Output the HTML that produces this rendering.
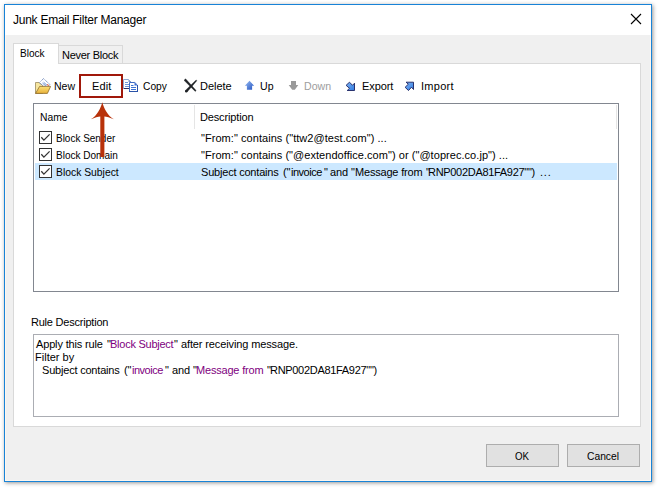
<!DOCTYPE html>
<html><head><meta charset="utf-8">
<style>
*{box-sizing:border-box;margin:0;padding:0}
html,body{width:660px;height:492px;background:#fff;overflow:hidden;position:relative;font-family:"Liberation Sans",sans-serif;font-size:11px;color:#000}
.a{position:absolute;white-space:pre;line-height:14px}
svg.a{line-height:0}
#win{position:absolute;left:4px;top:4px;width:648px;height:478px;border:1px solid #1883d7;background:#f0f0f0;box-shadow:1px 1px 4px rgba(0,0,0,0.42)}
#titlebar{position:absolute;left:5px;top:5px;width:646px;height:30px;background:#fff}
#inner{position:absolute;left:5px;top:35px;width:646px;height:446px;border:1px solid #fdf7f0;border-top:none}
.tab{position:absolute;border:1px solid #d9d9d9;border-bottom:none}
#panel{position:absolute;left:13px;top:63px;width:628px;height:364px;background:#fff;border:1px solid #d9d9d9}
#list{position:absolute;left:33px;top:103px;width:586px;height:189px;border:1px solid #828790;background:#fff}
#rule{position:absolute;left:33px;top:334px;width:586px;height:83px;border:1px solid #abadb3;background:#fff}
.btn{position:absolute;top:444px;width:73px;height:23px;border:1px solid #adadad;background:#e1e1e1}
.cb{position:absolute;left:39px;width:13px;height:13px;border:1px solid #333;background:#fff}
.p{color:#800080}
</style></head><body>
<div id="win"></div>
<div id="titlebar"></div>
<div id="inner"></div>
<svg class="a" style="left:630px;top:13px" width="12" height="12" viewBox="0 0 12 12"><path d="M1 1L11 11M11 1L1 11" stroke="#000" stroke-width="1.1"/></svg>

<div id="panel"></div>
<div class="tab" style="left:58px;top:45px;width:65px;height:18px;background:#f0f0f0"></div>
<div class="tab" style="left:13px;top:43px;width:46px;height:21px;background:#fff"></div>

<!-- toolbar -->
<div class="a" style="left:79px;top:74px;width:44px;height:24px;border:2px solid #a0180a"></div>

<!-- icons -->
<svg class="a" style="left:35px;top:78px" width="16" height="16" viewBox="0 0 16 16">
 <defs><linearGradient id="gf" x1="0" y1="0" x2="0" y2="1"><stop offset="0" stop-color="#fadf78"/><stop offset="1" stop-color="#e9b23a"/></linearGradient></defs>
 <path d="M0.5 4.5 L4 4.5 L5.5 6 L7.5 6 L7.5 15.5 L0.5 15.5 Z" fill="#f6e6a0" stroke="#9c8a60" stroke-width="0.8"/>
 <path d="M8.5 0.6 L15 6.6 L11.2 10.5 L4.4 4.6 Z" fill="#fff" stroke="#4a6aa8" stroke-width="0.9" stroke-dasharray="1 0.8"/>
 <path d="M7.5 5 L11 8.2 M8.6 4.2 L12 7.3" stroke="#5f86cc" stroke-width="0.9"/>
 <path d="M12.2 6.3 L13.6 7.6" stroke="#e05030" stroke-width="1.1"/>
 <path d="M0.6 15.4 L4.6 8.4 L15.6 8.4 L12.4 15.4 Z" fill="url(#gf)" stroke="#8f6c2c" stroke-width="0.8"/>
</svg>
<svg class="a" style="left:122px;top:78px" width="17" height="15" viewBox="0 0 17 15">
 <path d="M1.5 1.5 L6.5 1.5 L9 4 L9 10.5 L1.5 10.5 Z" fill="#fff" stroke="#8ea8d4" stroke-width="1"/>
 <path d="M1.8 10.5 L7 10.5" stroke="#2c2f66" stroke-width="1"/>
 <path d="M6.5 1.5 L6.5 4 L9 4 Z" fill="#7c92c4"/>
 <path d="M3 4.5 L6 4.5 M3 6.5 L8 6.5 M3 8.5 L8 8.5" stroke="#5d8ad8" stroke-width="0.9"/>
 <path d="M7.5 4.5 L12.8 4.5 L15.5 7.2 L15.5 13.5 L7.5 13.5 Z" fill="#fff" stroke="#3f6cc4" stroke-width="1"/>
 <path d="M7 13.5 L16 13.5 M15.5 7 L15.5 14" stroke="#2a52a8" stroke-width="1"/>
 <path d="M12.5 4.5 L12.5 7.5 L15.5 7.5 Z" fill="#3a6ad0"/>
 <path d="M9 7.5 L11.5 7.5 M9 9.5 L14 9.5 M9 11.5 L14 11.5" stroke="#3c72d4" stroke-width="1"/>
</svg>
<svg class="a" style="left:183px;top:78px" width="15" height="15" viewBox="183 78 15 15">
 <path d="M184.0 80.36 L185.6 78.84 L196.13 90.59 L195.27 91.41 Z" fill="#1f2226" stroke="#1f2226" stroke-width="0.35" stroke-linejoin="round"/>
 <path d="M196.135 79.958 L196.865 80.642 L187.076 92.12 L185.324 90.48 Z" fill="#1f2226" stroke="#1f2226" stroke-width="0.35" stroke-linejoin="round"/>
 <circle cx="186.2" cy="91.3" r="1.2" fill="#1f2226"/>
</svg>
<svg class="a" style="left:243px;top:78px" width="14" height="14" viewBox="243 78 14 14">
 <defs><linearGradient id="gu" x1="0" y1="0" x2="1" y2="1"><stop offset="0" stop-color="#9cc0f4"/><stop offset="1" stop-color="#1f4fbf"/></linearGradient></defs>
 <path d="M249.5 80.8 L254.1 85.7 L252.1 85.7 L252.1 89.8 L246.9 89.8 L246.9 85.7 L244.9 85.7 Z" fill="url(#gu)"/>
</svg>
<svg class="a" style="left:287px;top:78px" width="14" height="14" viewBox="287 78 14 14">
 <path d="M291 81 L296 81 L296 85 L298.3 85 L294.8 89.8 L292.2 89.8 L288.7 85 L291 85 Z" fill="#9a9a9a"/>
</svg>
<svg class="a" style="left:343px;top:78px" width="16" height="16" viewBox="343 78 16 16">
 <defs><linearGradient id="ge" x1="0" y1="0" x2="1" y2="1"><stop offset="0" stop-color="#7fb4f4"/><stop offset="1" stop-color="#2f7ae0"/></linearGradient></defs>
 <path d="M354.5 83.2 L354.5 90.5 L347.2 90.5 L349.5 88.3 L346.1 85.3 L349.5 82.2 L352.5 85.3 Z" fill="url(#ge)" stroke="#1c2260" stroke-width="0.9"/>
</svg>
<svg class="a" style="left:402px;top:78px" width="16" height="16" viewBox="402 78 16 16">
 <path d="M413.5 82.2 L413.5 89.5 L411.5 87.2 L408.5 90.5 L405.1 87.3 L408.3 84.2 L406.1 82.2 Z" fill="url(#ge)" stroke="#1c2260" stroke-width="0.9"/>
</svg>

<div id="list"></div>
<div class="a" style="left:194px;top:105px;width:1px;height:24px;background:#e5e5e5"></div>
<div class="a" style="left:616px;top:105px;width:1px;height:24px;background:#e5e5e5"></div>
<div class="a" style="left:35px;top:163px;width:582px;height:17px;background:#cce8ff"></div>
<div class="cb" style="top:131px"></div>
<div class="cb" style="top:148px"></div>
<div class="cb" style="top:165px"></div>
<svg class="a" style="left:39px;top:131px" width="13" height="13" viewBox="0 0 13 13"><path d="M2.3 6.3 L4.9 9.1 L10.6 3.4" fill="none" stroke="#333" stroke-width="1.3"/></svg>
<svg class="a" style="left:39px;top:148px" width="13" height="13" viewBox="0 0 13 13"><path d="M2.3 6.3 L4.9 9.1 L10.6 3.4" fill="none" stroke="#333" stroke-width="1.3"/></svg>
<svg class="a" style="left:39px;top:165px" width="13" height="13" viewBox="0 0 13 13"><path d="M2.3 6.3 L4.9 9.1 L10.6 3.4" fill="none" stroke="#333" stroke-width="1.3"/></svg>

<div id="rule"></div>

<div class="btn" style="left:486px"></div>
<div class="btn" style="left:567px"></div>

<!-- texts -->
<div class="a" style="left:13px;top:13px;letter-spacing:-0.25px;font-size:12px;line-height:15px">Junk Email Filter Manager</div>
<div class="a" style="left:20.08px;top:46px;letter-spacing:0px;;transform:scaleX(0.915);transform-origin:0 0">Block</div>
<div class="a" style="left:62px;top:48px;letter-spacing:-0.27px;">Never Block</div>
<div class="a" style="left:54.04px;top:79px;letter-spacing:0px;;transform:scaleX(0.957);transform-origin:0 0">New</div>
<div class="a" style="left:92px;top:79px;letter-spacing:0.1px;">Edit</div>
<div class="a" style="left:142.8px;top:79px;letter-spacing:0px;;transform:scaleX(0.931);transform-origin:0 0">Copy</div>
<div class="a" style="left:200px;top:79px;letter-spacing:-0.02px;">Delete</div>
<div class="a" style="left:259.64px;top:79px;letter-spacing:0px;;transform:scaleX(0.962);transform-origin:0 0">Up</div>
<div class="a" style="left:304.04px;top:79px;letter-spacing:0px;color:#9d9d9d;;transform:scaleX(0.963);transform-origin:0 0">Down</div>
<div class="a" style="left:362px;top:79px;letter-spacing:-0.08px;">Export</div>
<div class="a" style="left:421px;top:79px;letter-spacing:0.28px;">Import</div>
<div class="a" style="left:39.96px;top:110px;letter-spacing:0px;;transform:scaleX(0.936);transform-origin:0 0">Name</div>
<div class="a" style="left:200px;top:110px;letter-spacing:-0.15px;">Description</div>
<div class="a" style="left:56.09px;top:131px;letter-spacing:0px;;transform:scaleX(0.906);transform-origin:0 0">Block Sender</div>
<div class="a" style="left:56.09px;top:148px;letter-spacing:0px;;transform:scaleX(0.910);transform-origin:0 0">Block Domain</div>
<div class="a" style="left:56.06px;top:165px;letter-spacing:0px;;transform:scaleX(0.941);transform-origin:0 0">Block Subject</div>
<div class="a" style="left:201px;top:131px;letter-spacing:0.051px;">"From:" contains ("ttw2@test.com") ...</div>
<div class="a" style="left:201px;top:148px;letter-spacing:0.047px;">"From:" contains ("@extendoffice.com") or ("@toprec.co.jp") ...</div>
<div class="a" style="left:31px;top:315px;letter-spacing:-0.22px;">Rule Description</div>
<div class="a" style="left:514.8px;top:449px;letter-spacing:0px;;transform:scaleX(0.881);transform-origin:0 0">OK</div>
<div class="a" style="left:586.6px;top:449px;letter-spacing:0px;;transform:scaleX(0.935);transform-origin:0 0">Cancel</div>
<div class="a" style="left:35px;top:350px;letter-spacing:0.012px;">Filter by</div>
<div class="a" style="left:42px;top:363px;letter-spacing:-0.2px;">Subject contains</div>
<div class="a" style="left:201px;top:165px;letter-spacing:-0.2px;">Subject contains</div>
<div class="a" style="left:124px;top:363px;letter-spacing:-0.2px;">("</div>
<div class="a" style="left:283px;top:165px;letter-spacing:-0.2px;">("</div>
<div class="a" style="left:132px;top:363px;letter-spacing:-0.483px;color:#800080">invoice</div>
<div class="a" style="left:291px;top:165px;letter-spacing:-0.483px;">invoice</div>
<div class="a" style="left:165px;top:363px;letter-spacing:0.0px;">"</div>
<div class="a" style="left:324px;top:165px;letter-spacing:0.0px;">"</div>
<div class="a" style="left:172px;top:363px;letter-spacing:-0.1px;">and</div>
<div class="a" style="left:330px;top:165px;letter-spacing:-0.1px;">and</div>
<div class="a" style="left:193px;top:363px;letter-spacing:0.0px;">"</div>
<div class="a" style="left:351px;top:165px;letter-spacing:0.0px;">"</div>
<div class="a" style="left:196px;top:363px;letter-spacing:-0.191px;color:#800080">Message from</div>
<div class="a" style="left:355px;top:165px;letter-spacing:-0.191px;">Message from</div>
<div class="a" style="left:267px;top:363px;letter-spacing:0.0px;">"</div>
<div class="a" style="left:426px;top:165px;letter-spacing:0.0px;">"</div>
<div class="a" style="left:270px;top:363px;letter-spacing:-0.306px;">RNP002DA81FA927"")</div>
<div class="a" style="left:428px;top:165px;letter-spacing:-0.306px;">RNP002DA81FA927"")</div>
<div class="a" style="left:540px;top:165px;letter-spacing:0.8px;">...</div>
<div class="a" style="left:36px;top:337px;letter-spacing:-0.15px;">Apply this rule</div>
<div class="a" style="left:107px;top:337px;letter-spacing:0.0px;">"</div>
<div class="a" style="left:110px;top:337px;letter-spacing:-0.25px;color:#800080">Block Subject</div>
<div class="a" style="left:174px;top:337px;letter-spacing:0.0px;">"</div>
<div class="a" style="left:181px;top:337px;letter-spacing:-0.126px;">after receiving message.</div>
<!-- /texts -->
<svg class="a" style="left:88px;top:100px" width="30" height="60" viewBox="88 100 30 60"><path d="M102.3 102.2 C103.8 108 107.5 115.5 113.9 119.3 C110 117.6 106.5 116.4 104.4 116.4 L104.4 157 L100.3 157 L100.3 116.4 C98.2 116.4 94.7 117.6 90.9 119.3 C97.2 115.5 100.8 108 102.3 102.2Z" fill="#b8320a"/></svg>
</body></html>
